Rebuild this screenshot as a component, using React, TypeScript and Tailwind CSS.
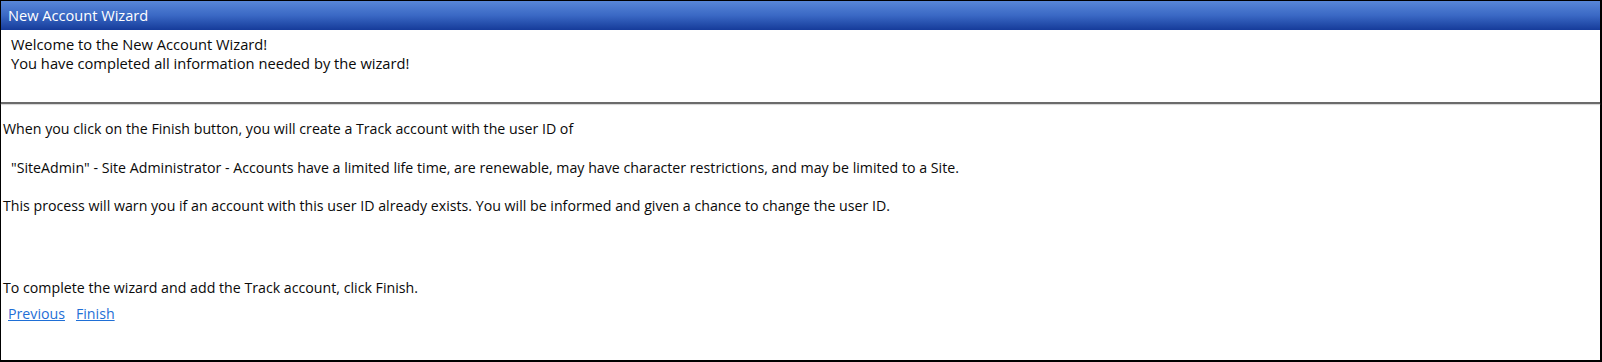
import React from "react";

function TitleBar({ title }: { title: string }) {
  return (
    <div className="h-[29px] flex items-center pl-[7px] bg-linear-to-b from-[#5887d8] via-[#3a68c4] to-[#163b9a] text-white text-[14.6px]">
      {title}
    </div>
  );
}

export default function App() {
  return (
    <div className="w-[1602px] h-[362px] box-border border-l border-t border-b-2 border-r-2 border-black bg-white flex flex-col font-['Open_Sans',sans-serif] text-[14.2px] leading-[19px] text-[#0a0a0a]">
      <TitleBar title="New Account Wizard" />
      <div className="h-[72px] pl-[10px] pt-[5px] text-[14.7px]">
        <p>Welcome to the New Account Wizard!</p>
        <p>You have completed all information needed by the wizard!</p>
      </div>
      <hr className="border-0 border-t-2 border-[#6b6b6b] shadow-[0_1px_1px_#d4d4d4]" />
      <div className="pl-[2px] pt-[15px]">
        <p>When you click on the Finish button, you will create a Track account with the user ID of</p>
        <p className="mt-[20px] pl-[8px]">
          "SiteAdmin" - Site Administrator - Accounts have a limited life time, are renewable, may have character restrictions, and may be limited to a Site.
        </p>
        <p className="mt-[19px]">
          This process will warn you if an account with this user ID already exists. You will be informed and given a chance to change the user ID.
        </p>
        <p className="mt-[63px]">To complete the wizard and add the Track account, click Finish.</p>
        <div className="mt-[7px] pl-[5px] flex gap-[11px]">
          <a href="#" className="text-[#1f6fd6] underline">Previous</a>
          <a href="#" className="text-[#1f6fd6] underline">Finish</a>
        </div>
      </div>
    </div>
  );
}
